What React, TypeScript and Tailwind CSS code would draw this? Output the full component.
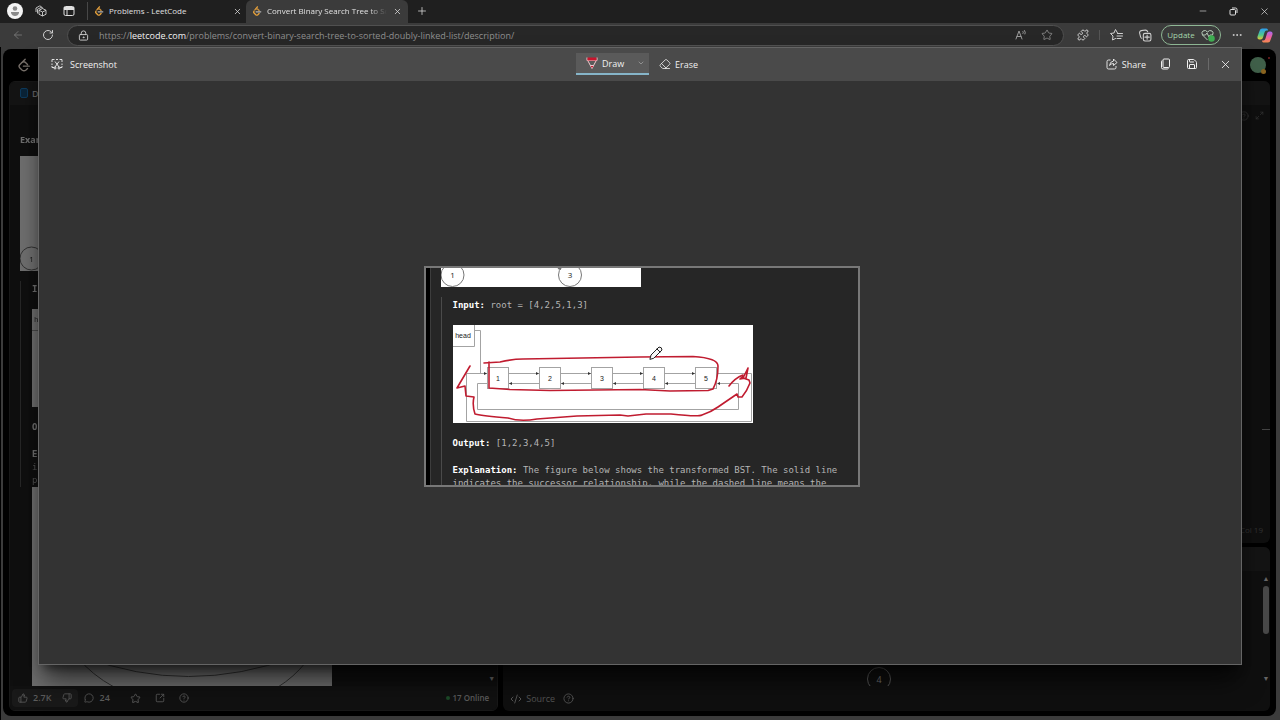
import type { ReactNode } from "react";
import {
  ArrowLeft,
  ChevronDown,
  CircleHelp,
  CodeXml,
  Ellipsis,
  Eraser,
  LockKeyhole,
  Maximize2,
  MessageCircle,
  Minus,
  Plus,
  Puzzle,
  RotateCw,
  Save,
  SquareArrowOutUpRight,
  Star,
  ThumbsDown,
  ThumbsUp,
  X,
} from "lucide-react";

const nodes = [1, 2, 3, 4, 5];

function LeetCodeIcon({ className }: { className: string }) {
  return (
    <svg viewBox="0 0 24 24" className={className} fill="none" strokeWidth="3.2" strokeLinecap="round" strokeLinejoin="round">
      <path d="M13 2 9 7M5 12q-2 3 0 5l4 4q2.500 2 5 0l3-3" stroke="#e8a23a" />
      <path d="M7 9q4-4 7-1l3 3" stroke="#c98f3c" />
      <path d="M10 14h11" stroke="#b3b3b3" />
    </svg>
  );
}

function ListDiagram() {
  return (
    <svg width="300" height="98" viewBox="0 0 300 98" className="block bg-white" fill="none" stroke="#a3a3a3">
      <path d="M21.500 0V21.500H0M21.500 5.500H27.500V48" />
      <path d="M264 48.500H298.500V96.500H13.500V48.500H34M35 58.500H24.500V84.500H285.500V58.500H265" />
      {nodes.map((n, i) => (
        <g key={n}>
          <rect x={34.5 + i * 52} y="42.5" width="21" height="21" fill="#fff" />
          {i < 4 && <path d={`M${55 + i * 52} 48.500h31M${55 + i * 52} 58.500h31`} />}
          <path d={`M${31 + i * 52} 47l3 1.500-3 1.500zM${59 + i * 52} 57l-3 1.500 3 1.500z`} fill="#333" stroke="none" />
          <text x={45 + i * 52} y="56" textAnchor="middle" fontSize="7" fill="#222" stroke="none">
            {n}
          </text>
        </g>
      ))}
      <text x="10" y="13" textAnchor="middle" fontSize="7" fill="#222" stroke="none">
        head
      </text>
    </svg>
  );
}

function ExampleBlock({ children }: { children?: ReactNode }) {
  return (
    <div className="mt-2.5 whitespace-nowrap border-l border-[#4a4a4a] pl-[11px] pt-0.5 font-['DejaVu_Sans_Mono',monospace] text-[9px] leading-[13px] text-[#b5b5b5]">
      <p>
        <b className="text-white">Input:</b> root = [4,2,5,1,3]
      </p>
      <div className="mt-[13px] font-['Liberation_Sans',sans-serif]">
        <ListDiagram />
      </div>
      <p className="mt-3.5">
        <b className="text-white">Output:</b> [1,2,3,4,5]
      </p>
      <p className="mt-3.5">
        <b className="text-white">Explanation:</b> The figure below shows the transformed BST. The solid line
        <br />
        indicates the successor relationship, while the dashed line means the
      </p>
      {children}
    </div>
  );
}

function TabStrip() {
  return (
    <div className="flex h-[23px] items-center bg-[#1f1f1f] text-[#e0e0e0]">
      <button aria-label="Profile" className="ml-[7px] size-4">
        <svg viewBox="0 0 16 16">
          <circle cx="8" cy="8" r="8" fill="#f4f4f4" />
          <circle cx="8" cy="5.5" r="2.3" fill="#8a8a8a" />
          <path d="M4 9h8v1q-1 3-4 3t-4-3z" fill="#8a8a8a" />
        </svg>
      </button>
      <button aria-label="Workspaces" className="ml-3 size-3">
        <svg viewBox="0 0 24 24" fill="none" stroke="#d0d0d0" strokeWidth="1.800" strokeLinejoin="round">
          <path d="m15 7 7 3.500v8L15 22l-7-3.500v-8zM8 10.500l7 3.500 7-3.500M15 14v8" />
          <path d="M5 17V8.500L12 5l4 1M2 14V6l7-4 4 1" />
        </svg>
      </button>
      <button aria-label="Tab actions" className="ml-4 size-3">
        <svg viewBox="0 0 24 24" fill="none" stroke="#e0e0e0" strokeWidth="2">
          <rect x="2" y="3" width="20" height="18" rx="3" />
          <path d="M2 6h20M2 8h20" strokeWidth="4" />
          <path d="M8 8v13" />
        </svg>
      </button>
      <div className="ml-3 h-[18px] w-px bg-[#484848]" />
      <div className="flex h-full w-[158px] items-center pl-1.5 pr-1">
        <LeetCodeIcon className="size-2.5 shrink-0" />
        <span className="ml-[5px] grow text-[8px]">Problems - LeetCode</span>
        <button aria-label="Close tab">
          <X size={9} />
        </button>
      </div>
      <div className="flex h-full w-[162px] items-center rounded-t-md bg-[#3b3b3b] pl-1.5 pr-1.5">
        <LeetCodeIcon className="size-2.5 shrink-0" />
        <span className="ml-[5px] w-[120px] overflow-hidden whitespace-nowrap text-[8px] [mask-image:linear-gradient(to_right,black_85%,transparent)]">
          Convert Binary Search Tree to Sor
        </span>
        <button aria-label="Close tab" className="ml-auto">
          <X size={9} />
        </button>
      </div>
      <button aria-label="New tab" className="ml-2">
        <Plus size={12} strokeWidth={1.5} />
      </button>
      <div className="ml-auto mr-2.5 flex items-center gap-[21px]">
        <button aria-label="Minimize">
          <Minus size={10} strokeWidth={1.5} />
        </button>
        <button aria-label="Restore">
          <svg width="9" height="9" viewBox="0 0 9 9" fill="none" stroke="currentColor">
            <rect x="1" y="2.5" width="5.5" height="5.5" rx="1" />
            <path d="M3 1h3.500q1.500 0 1.500 1.500V6" />
          </svg>
        </button>
        <button aria-label="Close window">
          <X size={11} strokeWidth={1.5} />
        </button>
      </div>
    </div>
  );
}

function AddressBar() {
  return (
    <div className="flex h-6 items-center bg-[#3b3b3b] pb-px pt-0.5 text-[#d0d0d0]">
      <button aria-label="Back" className="ml-3 text-[#777]">
        <ArrowLeft size={12} strokeWidth={1.8} />
      </button>
      <button aria-label="Refresh" className="ml-[18px]">
        <RotateCw size={12} />
      </button>
      <div className="ml-[13px] flex h-[21px] grow items-center rounded-full border border-[#505050] bg-[#272727] pl-2.5 pr-2.5">
        <LockKeyhole size={11} />
        <p className="ml-2.5 grow text-[9px] text-[#8f8f8f]">
          https://<span className="text-[#f2f2f2]">leetcode.com</span>
          /problems/convert-binary-search-tree-to-sorted-doubly-linked-list/description/
        </p>
        <button aria-label="Read aloud" className="text-[#9a9a9a]">
          <svg width="12" height="12" viewBox="0 0 12 12" fill="none" stroke="currentColor" strokeLinecap="round">
            <path d="m1 10 3-8 3 8M2 7.500h4M8 2.500q.8 1 0 2M9.500 1.500q1.500 2 .5 3.500" />
          </svg>
        </button>
        <button aria-label="Add to favorites" className="ml-3.5 text-[#9a9a9a]">
          <Star size={12} strokeWidth={1.5} />
        </button>
      </div>
      <button aria-label="Extensions" className="ml-[13px]">
        <Puzzle size={12} />
      </button>
      <div className="ml-2.5 h-2.5 w-px bg-[#555]" />
      <button aria-label="Favorites" className="ml-2.5">
        <svg width="13" height="12" viewBox="0 0 26 24" fill="none" stroke="currentColor" strokeWidth="2" strokeLinejoin="round" strokeLinecap="round">
          <path d="M15 8 11 1 8 8l-7 1 5 5-1 8 6-3M15 9h10M14 14h11M14 19h8" />
        </svg>
      </button>
      <button aria-label="Collections" className="ml-4">
        <svg width="13" height="13" viewBox="0 0 24 24" fill="none" stroke="currentColor" strokeWidth="2" strokeLinecap="round">
          <rect x="8" y="8" width="14" height="14" rx="3" />
          <path d="M15 11v8M11 15h8M5 17q-1 0-2-2L1 7q0-3 3-4l8-1q3 0 4 3" />
        </svg>
      </button>
      <button className="ml-[9px] flex h-5 w-[60px] items-center justify-center gap-1.5 rounded-full border border-[#8fb795] text-[8px] text-[#a5d6ac]">
        Update
        <svg width="14" height="13" viewBox="0 0 28 26" fill="none" stroke="#b9cdbb" strokeWidth="2">
          <path d="M13 22 3 12Q0 7 4 4q5-3 9 2 4-5 9-2 4 3 1 8M3 12h6l3-4 4 8 2-4h5" />
          <circle cx="21" cy="19" r="6.500" fill="#3fae52" stroke="none" />
        </svg>
      </button>
      <button aria-label="Settings and more" className="ml-2.5">
        <Ellipsis size={12} />
      </button>
      <button aria-label="Copilot" className="ml-3.5 mr-[7px]">
        <svg width="16" height="15" viewBox="0 0 32 30">
          <defs>
            <linearGradient id="pilotLeft" x1="0" y1="0" x2="0" y2="1">
              <stop offset="0" stopColor="#2c9df0" />
              <stop offset="0.6" stopColor="#4fc98a" />
              <stop offset="1" stopColor="#e8c934" />
            </linearGradient>
            <linearGradient id="pilotRight" x1="0" y1="0" x2="0" y2="1">
              <stop offset="0" stopColor="#a56af0" />
              <stop offset="0.5" stopColor="#ee5f9f" />
              <stop offset="1" stopColor="#f58a4c" />
            </linearGradient>
          </defs>
          <path d="M10 1h9q3 0 3 4h-3q-3 0-4 4l-3 10q-1 4-5 4H5q-5 0-4-6L5 6q1-5 5-5z" fill="url(#pilotLeft)" />
          <path d="M22 29h-9q-3 0-3-4h3q3 0 4-4l3-10q1-4 5-4h2q5 0 4 6l-4 11q-1 5-5 5z" fill="url(#pilotRight)" />
          <path d="M16 11h2l-2 8h-2z" fill="#3b3b3b" />
        </svg>
      </button>
    </div>
  );
}

function ProblemPanel() {
  return (
    <section className="flex min-w-0 flex-[488] flex-col overflow-hidden rounded-md border border-[#181818] bg-[#0f0f0f]">
      <div className="flex h-[23px] items-center gap-1 bg-[#141414] pl-2.5 text-[9px] font-semibold text-[#666]">
        <span className="h-2.5 w-2 rounded-xs border border-[#0d3a5c] bg-[#0a2438]" />
        Description
      </div>
      <div className="relative min-h-0 grow overflow-hidden">
        <div className="pl-2.5 pt-7 opacity-40">
          <p className="text-[9px] font-bold leading-[13px] text-white">Example 1:</p>
          <div className="mt-2.5 flex h-[115px] w-[200px] flex-col justify-end bg-white">
            <svg width="200" height="25" viewBox="0 0 200 25" fill="none" stroke="#666">
              <circle cx="11.500" cy="12.500" r="11.500" />
              <text x="11.500" y="15.500" textAnchor="middle" fontSize="8" fill="#222" stroke="none">
                1
              </text>
            </svg>
          </div>
          <ExampleBlock>
            <p>predecessor relationship.</p>
          </ExampleBlock>
          <svg width="300" height="200" viewBox="0 0 300 200" className="ml-3 block bg-white" fill="none" stroke="#666">
            <path d="M52 170Q156 209 262 170M45 170Q60 188 82 200M274 175Q262 190 246 200" />
          </svg>
        </div>
        <span className="absolute bottom-1 right-0.5 text-[7px] leading-none text-[#666]">▼</span>
      </div>
      <div className="flex h-6 items-center bg-[#111] pl-0.5 pr-2 text-[9px] font-semibold text-[#5c5c5c]">
        <div className="flex h-[18px] items-center rounded bg-[#191919] px-1.5">
          <button className="flex items-center gap-[5px]">
            <ThumbsUp size={10} />
            2.7K
          </button>
          <button aria-label="Dislike" className="ml-2.5">
            <ThumbsDown size={10} />
          </button>
        </div>
        <button className="ml-1.5 flex items-center gap-1.5">
          <MessageCircle size={10} />
          24
        </button>
        <button aria-label="Favorite" className="ml-5">
          <Star size={11} />
        </button>
        <button aria-label="Open link" className="ml-3.5">
          <SquareArrowOutUpRight size={10} />
        </button>
        <button aria-label="Help" className="ml-3.5">
          <CircleHelp size={10} />
        </button>
        <span className="ml-auto flex items-center gap-0.5 text-[8px]">
          <span className="size-1 rounded-full bg-[#1c4a28]" />
          17 Online
        </span>
      </div>
    </section>
  );
}

function EditorColumn() {
  return (
    <div className="flex min-w-0 flex-[768] flex-col gap-1">
      <section className="flex grow flex-col rounded-md bg-[#0f0f0f] text-[#333]">
        <div className="h-6 rounded-t-md bg-[#141414]" />
        <div className="flex h-[22px] items-center justify-end gap-1.5 pr-1.5">
          <CircleHelp size={10} />
          <Maximize2 size={9} />
        </div>
        <div className="flex grow items-center justify-end">
          <span className="mt-52 h-px w-2 bg-[#444]" />
        </div>
        <p className="pb-[7px] pr-[7px] text-right text-[8px] leading-3">Ln 1, Col 19</p>
      </section>
      <section className="flex h-[164px] flex-col overflow-hidden rounded-md bg-[#0f0f0f]">
        <div className="h-6 shrink-0 bg-[#141414]" />
        <div className="flex min-h-0 grow">
          <div className="flex grow items-end justify-center overflow-hidden pr-2">
            <svg width="24" height="20" viewBox="0 0 24 20" fill="none" stroke="#5a5a5a">
              <circle cx="12" cy="13" r="11.500" />
              <text x="12" y="16.500" textAnchor="middle" fontSize="9" fill="#777" stroke="none">
                4
              </text>
            </svg>
          </div>
          <div className="flex w-2 flex-col items-center pb-1 pt-1 text-[7px] leading-none text-[#666]">
            <span>▲</span>
            <span className="mt-1 h-12 w-1.5 rounded-full bg-[#484848]" />
            <span className="mt-auto">▼</span>
          </div>
        </div>
        <div className="flex h-[25px] shrink-0 items-center gap-1 pl-[7px] text-[9px] text-[#555]">
          <CodeXml size={12} />
          Source
          <CircleHelp size={11} className="ml-1" />
        </div>
      </section>
    </div>
  );
}

function Snip() {
  return (
    <div className="relative h-[221px] w-[436px] overflow-hidden border-2 border-[#787878] bg-black pl-1">
      <div className="h-full border-l border-[#3d3d3d] bg-[#262626] pl-2.5">
        <svg width="200" height="19" viewBox="0 0 200 19" className="block bg-white" fill="none" stroke="#777">
          <circle cx="11.500" cy="7" r="11.500" />
          <circle cx="129" cy="7" r="11.500" />
          <path d="M117 0l3 1" strokeWidth="2" />
          <g fontSize="8" fill="#222" stroke="none" textAnchor="middle">
            <text x="11.500" y="10">
              1
            </text>
            <text x="129" y="10">
              3
            </text>
          </g>
        </svg>
        <ExampleBlock />
      </div>
      <svg className="absolute left-[27px] top-14" width="300" height="98" viewBox="0 0 300 98" fill="none" strokeLinecap="round" strokeLinejoin="round">
        <g stroke="#c01c30" strokeWidth="1.600">
          <path d="M31 39 47 38 Q60 35 70 35L100 34.500 187 33 240 32.500Q265 34 265 42 265 56 260 65L255 66.500 217 67 187 65.500 97 66.500 57 65.500 36 64 36 38" />
          <path d="M17 42 4 64l8-2 1 10 8 1q-2 8 1 17 8 2 33 4 12 4 29 1l40-3 43-1 8 1 18-2 25 0Q245 93 249 91q9-3 16-8l19-13 1 3h4q5-6 8-14l-1-3-6-2 5-10-2 10-6 1 3-3" />
          <path d="M276 62q6-8 14-11" />
        </g>
        <g stroke="#222" fill="#f7f7f7">
          <path d="m197 35 1-4 8-8q3 0 3 3l-8 8zM204 25l3 3" />
        </g>
      </svg>
    </div>
  );
}

function ScreenshotDialog() {
  return (
    <div
      role="dialog"
      aria-label="Screenshot"
      className="absolute bottom-[55px] left-[37px] right-[38px] top-0 flex flex-col border border-[#656565] bg-[#333] text-[9px] text-[#f0f0f0] shadow-xl shadow-black/60"
    >
      <div className="grid h-[33px] shrink-0 grid-cols-[1fr_auto_1fr] items-center bg-[#4a4a4a]">
        <div className="flex items-center gap-[7px] pl-3">
          <svg width="12" height="12" viewBox="0 0 24 24" fill="none" stroke="currentColor" strokeWidth="1.800">
            <path d="M2 8V3h5M10 3h4M17 3h5v5M22 11v3M2 11v3M2 16v3h4M22 16v3h-4M8 7l8 11M16 7 8 18" />
            <circle cx="8" cy="20" r="2" />
            <circle cx="16" cy="20" r="2" />
          </svg>
          Screenshot
        </div>
        <div className="flex items-center">
          <button className="flex h-[22px] w-[73px] items-center border-b-2 border-[#86b5c9] bg-[#5a5a5a] pl-2.5 pr-1">
            <svg width="12" height="12" viewBox="0 0 24 24" fill="none" stroke="#f0c8cc" strokeWidth="2" strokeLinejoin="round">
              <path d="M2 1v6h20V1" />
              <path d="M3 1h18v6H3z" fill="#c9152d" stroke="none" />
              <path d="m4 8 8 15 8-15M9 17h6" />
              <path d="m9.500 18 2.500 4 2.500-4z" fill="#c9152d" stroke="none" />
            </svg>
            <span className="ml-1">Draw</span>
            <ChevronDown size={8} className="ml-auto text-[#aaa]" />
          </button>
          <button className="flex h-[22px] w-[55px] items-center gap-1 pl-2.5">
            <Eraser size={12} strokeWidth={1.6} />
            Erase
          </button>
        </div>
        <div className="flex items-center justify-end pr-[9px]">
          <button className="flex items-center gap-1">
            <svg width="12" height="12" viewBox="0 0 24 24" fill="none" stroke="currentColor" strokeWidth="1.800" strokeLinejoin="round">
              <path d="M9 4H5Q2 4 2 7v12q0 3 3 3h12q3 0 3-3v-3" />
              <path d="M15 2l7 7-7 6v-4q-5 0-8 4 1-8 8-9z" />
            </svg>
            Share
          </button>
          <button aria-label="Copy" className="ml-3.5">
            <svg width="11" height="12" viewBox="0 0 22 24" fill="none" stroke="currentColor" strokeWidth="2">
              <rect x="6" y="2" width="13" height="17" rx="2" />
              <path d="M4 5Q3 6 3 8v11q0 3 3 3h8q2 0 3-1" />
            </svg>
          </button>
          <button aria-label="Save" className="ml-[15px]">
            <Save size={12} />
          </button>
          <div className="ml-2.5 h-3 w-px bg-[#6a6a6a]" />
          <button aria-label="Close" className="ml-2.5">
            <X size={13} strokeWidth={1.6} />
          </button>
        </div>
      </div>
      <div className="flex grow items-center justify-center pl-[3px] pt-2">
        <Snip />
      </div>
    </div>
  );
}

export default function App() {
  return (
    <div className="flex h-screen flex-col overflow-hidden bg-[#3b3b3b] font-['Open_Sans','Noto_Sans',sans-serif]">
      <TabStrip />
      <AddressBar />
      <main className="relative flex min-h-0 grow flex-col border-l border-black pb-1 pl-0.5 pr-1 pt-0.5">
        <div className="flex min-h-0 grow flex-col rounded-lg bg-black px-1.5 pb-[5px]">
          <header className="flex h-8 shrink-0 items-center justify-between pl-2 pr-1">
            <svg width="14" height="14" viewBox="0 0 24 24" fill="none" stroke="#77706a" strokeWidth="2.400" strokeLinecap="round">
              <path d="M14 2 5 11q-3 3 0 6l4 4q3 2 6 0l3-3M8 8q4-3 7 0l3 3M11 14h10" />
            </svg>
            <span className="relative size-4 rounded-full bg-[#40604a]">
              <span className="absolute -right-1 top-0 size-0.5 rounded-full bg-[#7a2020]" />
              <span className="absolute -bottom-px right-0 size-[5px] rounded-full bg-[#8a6420]" />
            </span>
          </header>
          <div className="flex min-h-0 grow gap-[5px]">
            <ProblemPanel />
            <EditorColumn />
          </div>
        </div>
        <ScreenshotDialog />
      </main>
    </div>
  );
}
